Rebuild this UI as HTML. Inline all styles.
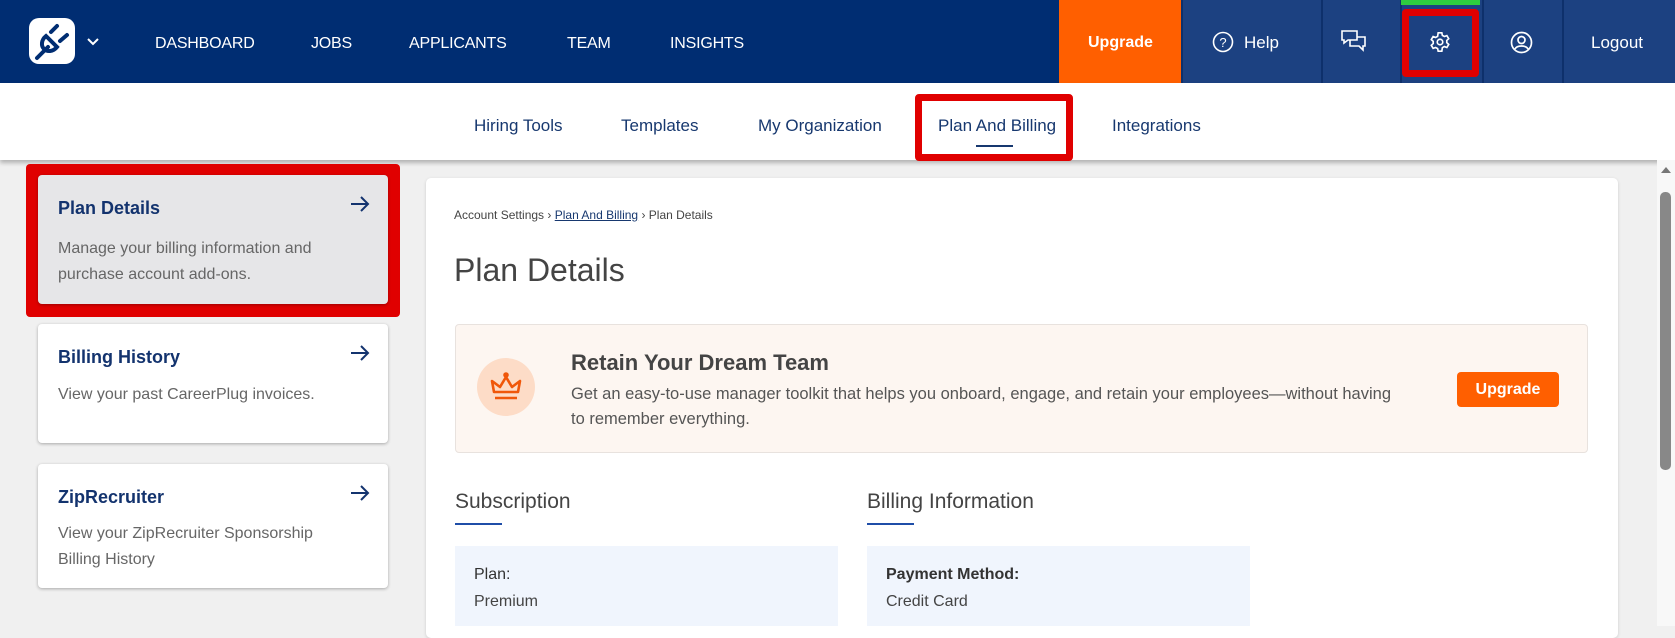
<!DOCTYPE html>
<html><head><meta charset="utf-8"><style>
*{margin:0;padding:0;box-sizing:border-box}
body{width:1675px;height:626px;overflow:hidden;background:#f0f0f0;font-family:"Liberation Sans",sans-serif;position:relative}
.a{position:absolute;white-space:nowrap}
#nav{left:0;top:0;width:1675px;height:83px;background:#002d72}
.ni{color:#fff;font-size:16px;top:35px;letter-spacing:-0.2px}
.tb{top:0;height:83px;background:#1c4181;border-left:2px solid #0e306b}
#sub{left:0;top:83px;width:1675px;height:77px;background:#fff;box-shadow:0 3px 4px rgba(0,0,0,.25)}
.si{color:#17386f;font-size:17px;top:116px}
.card{background:#fff;border-radius:4px;box-shadow:0 1px 3px rgba(0,0,0,.3);width:350px}
.ct{color:#13336e;font-weight:bold;font-size:18px;left:20px;top:23px}
.cd{color:#666;font-size:16px;left:20px;line-height:26px;white-space:normal;width:300px}
.arr{right:18px;top:20px}
</style></head><body>
<div class="a" id="nav"></div>
<div class="a" style="left:29px;top:18px;width:46px;height:46px;background:#fff;border-radius:10px"></div>
<svg class="a" style="left:29px;top:18px" width="46" height="46" viewBox="0 0 46 46"><g fill="none" stroke="#002d72" stroke-width="4" stroke-linecap="round"><path d="M8 40 L19 29"/><path d="M17 18 L28 29 C24 34 18 34 15 31 C12 28 12 22 17 18Z"/><path d="M22 14 L28 8"/><path d="M31 23 L38 17"/></g></svg>
<svg class="a" style="left:87px;top:38px" width="12" height="8"><path d="M1 1 L6 6 L11 1" stroke="#fff" stroke-width="2" fill="none"/></svg>
<div class="a ni" style="left:155px">DASHBOARD</div>
<div class="a ni" style="left:311px">JOBS</div>
<div class="a ni" style="left:409px">APPLICANTS</div>
<div class="a ni" style="left:567px">TEAM</div>
<div class="a ni" style="left:670px">INSIGHTS</div>
<div class="a" style="left:1059px;top:0;width:122px;height:83px;background:#ff5f00"></div>
<div class="a" style="left:1088px;top:34px;color:#fff;font-weight:bold;font-size:16px">Upgrade</div>
<div class="a tb" style="left:1181px;width:140px"></div>
<svg class="a" style="left:1212px;top:31px" width="22" height="22"><circle cx="11" cy="11" r="9.5" stroke="#fff" stroke-width="1.6" fill="none"/><text x="11" y="16" fill="#fff" font-size="13" text-anchor="middle" font-family="Liberation Sans">?</text></svg>
<div class="a" style="left:1244px;top:33px;color:#fff;font-size:17px">Help</div>
<div class="a tb" style="left:1321px;width:79px"></div>
<svg class="a" style="left:1340px;top:29px" width="28" height="24" fill="none" stroke="#fff" stroke-width="1.6"><path d="M2 2 H17 V11 H8 L4 14 V11 H2 Z"/><path d="M10 11 V17 H19 L23 21 V17 H25 V8 H17"/></svg>
<div class="a tb" style="left:1400px;width:82px"></div>
<div class="a" style="left:1401px;top:0;width:79px;height:5px;background:#2ecc40"></div>
<div class="a" style="left:1402px;top:9px;width:77px;height:68px;border:7px solid #e00000;border-radius:4px"></div>
<svg class="a" style="left:1429px;top:31px" width="22" height="22" viewBox="0 0 24 24" fill="none" stroke="#fff" stroke-width="1.8"><circle cx="12" cy="12" r="3"/><path d="M10 2h4l.6 2.8 2.2 1.2 2.7-1 2 3.4-2.1 1.9v2.4l2.1 1.9-2 3.4-2.7-1-2.2 1.2L14 22h-4l-.6-2.8-2.2-1.2-2.7 1-2-3.4 2.1-1.9v-2.4L2.5 9.4l2-3.4 2.7 1 2.2-1.2z"/></svg>
<div class="a tb" style="left:1482px;width:80px"></div>
<svg class="a" style="left:1510px;top:31px" width="23" height="23" fill="none" stroke="#fff" stroke-width="1.7"><circle cx="11.5" cy="11.5" r="10"/><circle cx="11.5" cy="9" r="3.5"/><path d="M5 18 C7 14 16 14 18 18"/></svg>
<div class="a tb" style="left:1562px;width:113px"></div>
<div class="a" style="left:1591px;top:33px;color:#fff;font-size:17px">Logout</div>

<div class="a" id="sub"></div>
<div class="a si" style="left:474px">Hiring Tools</div>
<div class="a si" style="left:621px">Templates</div>
<div class="a si" style="left:758px">My Organization</div>
<div class="a si" style="left:938px">Plan And Billing</div>
<div class="a si" style="left:1112px">Integrations</div>
<div class="a" style="left:976px;top:145px;width:37px;height:2px;background:#17386f"></div>
<div class="a" style="left:915px;top:94px;width:158px;height:67px;border:7px solid #e00000;border-radius:4px"></div>

<div class="a" style="left:26px;top:164px;width:374px;height:153px;background:#e00000;border-radius:4px"></div>
<div class="a card" style="left:38px;top:175px;height:129px;background:#e6e6e8">
<div class="a ct">Plan Details</div>
<div class="a cd" style="top:61px">Manage your billing information and purchase account add-ons.</div>
<svg class="a arr" width="20" height="18" fill="none" stroke="#13336e" stroke-width="2"><path d="M1 9 H18 M11 2 L18 9 L11 16"/></svg></div>
<div class="a card" style="left:38px;top:324px;height:119px">
<div class="a ct">Billing History</div>
<div class="a cd" style="top:58px">View your past CareerPlug invoices.</div>
<svg class="a arr" width="20" height="18" fill="none" stroke="#13336e" stroke-width="2"><path d="M1 9 H18 M11 2 L18 9 L11 16"/></svg></div>
<div class="a card" style="left:38px;top:464px;height:124px">
<div class="a ct">ZipRecruiter</div>
<div class="a cd" style="top:57px">View your ZipRecruiter Sponsorship Billing History</div>
<svg class="a arr" width="20" height="18" fill="none" stroke="#13336e" stroke-width="2"><path d="M1 9 H18 M11 2 L18 9 L11 16"/></svg></div>

<div class="a" style="left:426px;top:178px;width:1192px;height:460px;background:#fff;border-radius:5px;box-shadow:0 1px 3px rgba(0,0,0,.15)"></div>
<div class="a" style="left:454px;top:208px;font-size:12px;color:#444">Account Settings &rsaquo; <span style="color:#17386f;text-decoration:underline">Plan And Billing</span> &rsaquo; Plan Details</div>
<div class="a" style="left:454px;top:252px;font-size:32px;color:#444;font-weight:300">Plan Details</div>
<div class="a" style="left:455px;top:324px;width:1133px;height:129px;background:#fdf6f1;border:1px solid #e8e2de;border-radius:4px"></div>
<div class="a" style="left:477px;top:358px;width:58px;height:58px;border-radius:50%;background:#fddcc7"></div>
<svg class="a" style="left:490px;top:372px" width="32" height="30" fill="none" stroke="#f0570a" stroke-width="2.6" stroke-linejoin="round"><path d="M4 20 L2 9 L10 15 L16 5 L22 15 L30 9 L28 20 Z"/><path d="M5 26 H27"/><circle cx="16" cy="3" r="1.5" fill="#f0570a"/></svg>
<div class="a" style="left:571px;top:350px;font-size:22px;color:#444;font-weight:bold">Retain Your Dream Team</div>
<div class="a" style="left:571px;top:382px;font-size:16.5px;color:#555;line-height:25px">Get an easy-to-use manager toolkit that helps you onboard, engage, and retain your employees—without having<br>to remember everything.</div>
<div class="a" style="left:1457px;top:372px;width:102px;height:35px;background:#ff5f00;border-radius:4px;color:#fff;font-weight:bold;font-size:16px;text-align:center;line-height:35px">Upgrade</div>
<div class="a" style="left:455px;top:490px;font-size:21px;color:#444">Subscription</div>
<div class="a" style="left:455px;top:523px;width:47px;height:2px;background:#1f4ea8"></div>
<div class="a" style="left:867px;top:490px;font-size:21px;color:#444">Billing Information</div>
<div class="a" style="left:867px;top:523px;width:47px;height:2px;background:#1f4ea8"></div>
<div class="a" style="left:455px;top:546px;width:383px;height:80px;background:#f0f5fd"></div>
<div class="a" style="left:474px;top:566px;font-size:16px;color:#333">Plan:</div>
<div class="a" style="left:474px;top:593px;font-size:16px;color:#444">Premium</div>
<div class="a" style="left:867px;top:546px;width:383px;height:80px;background:#f0f5fd"></div>
<div class="a" style="left:886px;top:566px;font-size:16px;color:#333;font-weight:bold">Payment Method:</div>
<div class="a" style="left:886px;top:593px;font-size:16px;color:#444">Credit Card</div>
<div class="a" style="left:1657px;top:160px;width:18px;height:466px;background:#f8f8f8"></div>
<div class="a" style="left:1660px;top:192px;width:11px;height:278px;background:#888;border-radius:5px"></div>
<svg class="a" style="left:1661px;top:166px" width="10" height="8"><path d="M0 7 L5 1 L10 7Z" fill="#777"/></svg>
</body></html>
